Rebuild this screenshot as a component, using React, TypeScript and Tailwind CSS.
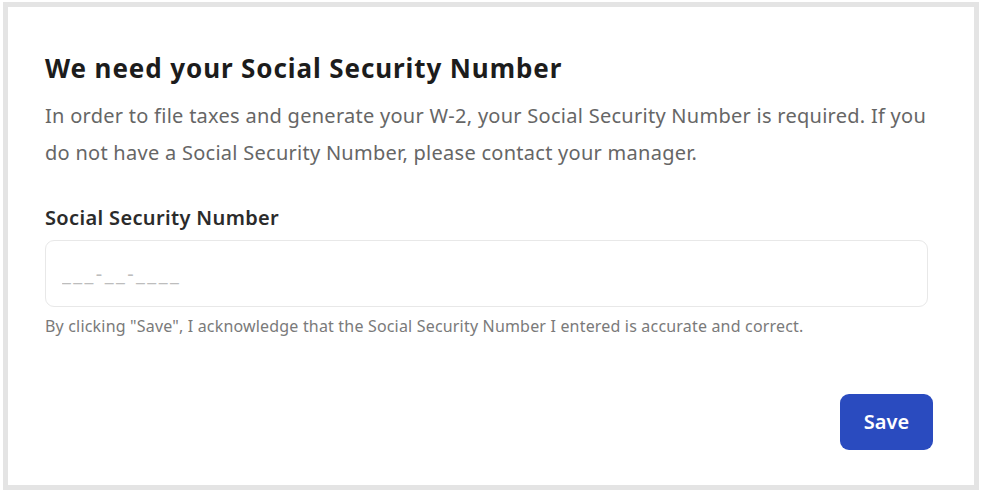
export default function App() {
  return (
    <div className="h-[496px] w-[984px] bg-white pl-[3px] pt-[2px] font-['Noto_Sans',sans-serif]">
      <div className="flex h-[488px] w-[976px] flex-col border-[5px] border-[#e4e4e4] bg-white pl-[37px] pr-[45px] pt-[45px]">
        <h1 className="text-[26px] leading-[32px] font-bold tracking-[0.9px] text-[#1c1c1c]">
          We need your Social Security Number
        </h1>
        <p className="mt-[13px] w-[888px] text-[20px] leading-[37px] tracking-[0.27px] text-[#666666]">
          In order to file taxes and generate your W-2, your Social Security Number is required. If you
          do not have a Social Security Number, please contact your manager.
        </p>
        <label className="mt-[34px] text-[20px] leading-[26px] font-semibold tracking-[0.35px] text-[#2b2b2b]">
          Social Security Number
        </label>
        <div className="mt-[9px] flex h-[67px] w-[883px] items-center rounded-[9px] border border-[#e8e8e8] px-[16px]">
          <input
            className="w-full bg-transparent text-[20px] tracking-[2.4px] text-[#333] outline-none placeholder:text-[#bdbdbd]"
            placeholder="___-__-____"
          />
        </div>
        <p className="mt-[9px] text-[16px] leading-[20px] tracking-[0.18px] text-[#7a7a7a]">
          By clicking "Save", I acknowledge that the Social Security Number I entered is accurate and correct.
        </p>
        <div className="mt-[58px] flex w-[888px] justify-end">
          <button className="h-[56px] w-[93px] rounded-[9px] bg-[#2a4bbf] text-[20px] font-semibold text-white">
            Save
          </button>
        </div>
      </div>
    </div>
  );
}
